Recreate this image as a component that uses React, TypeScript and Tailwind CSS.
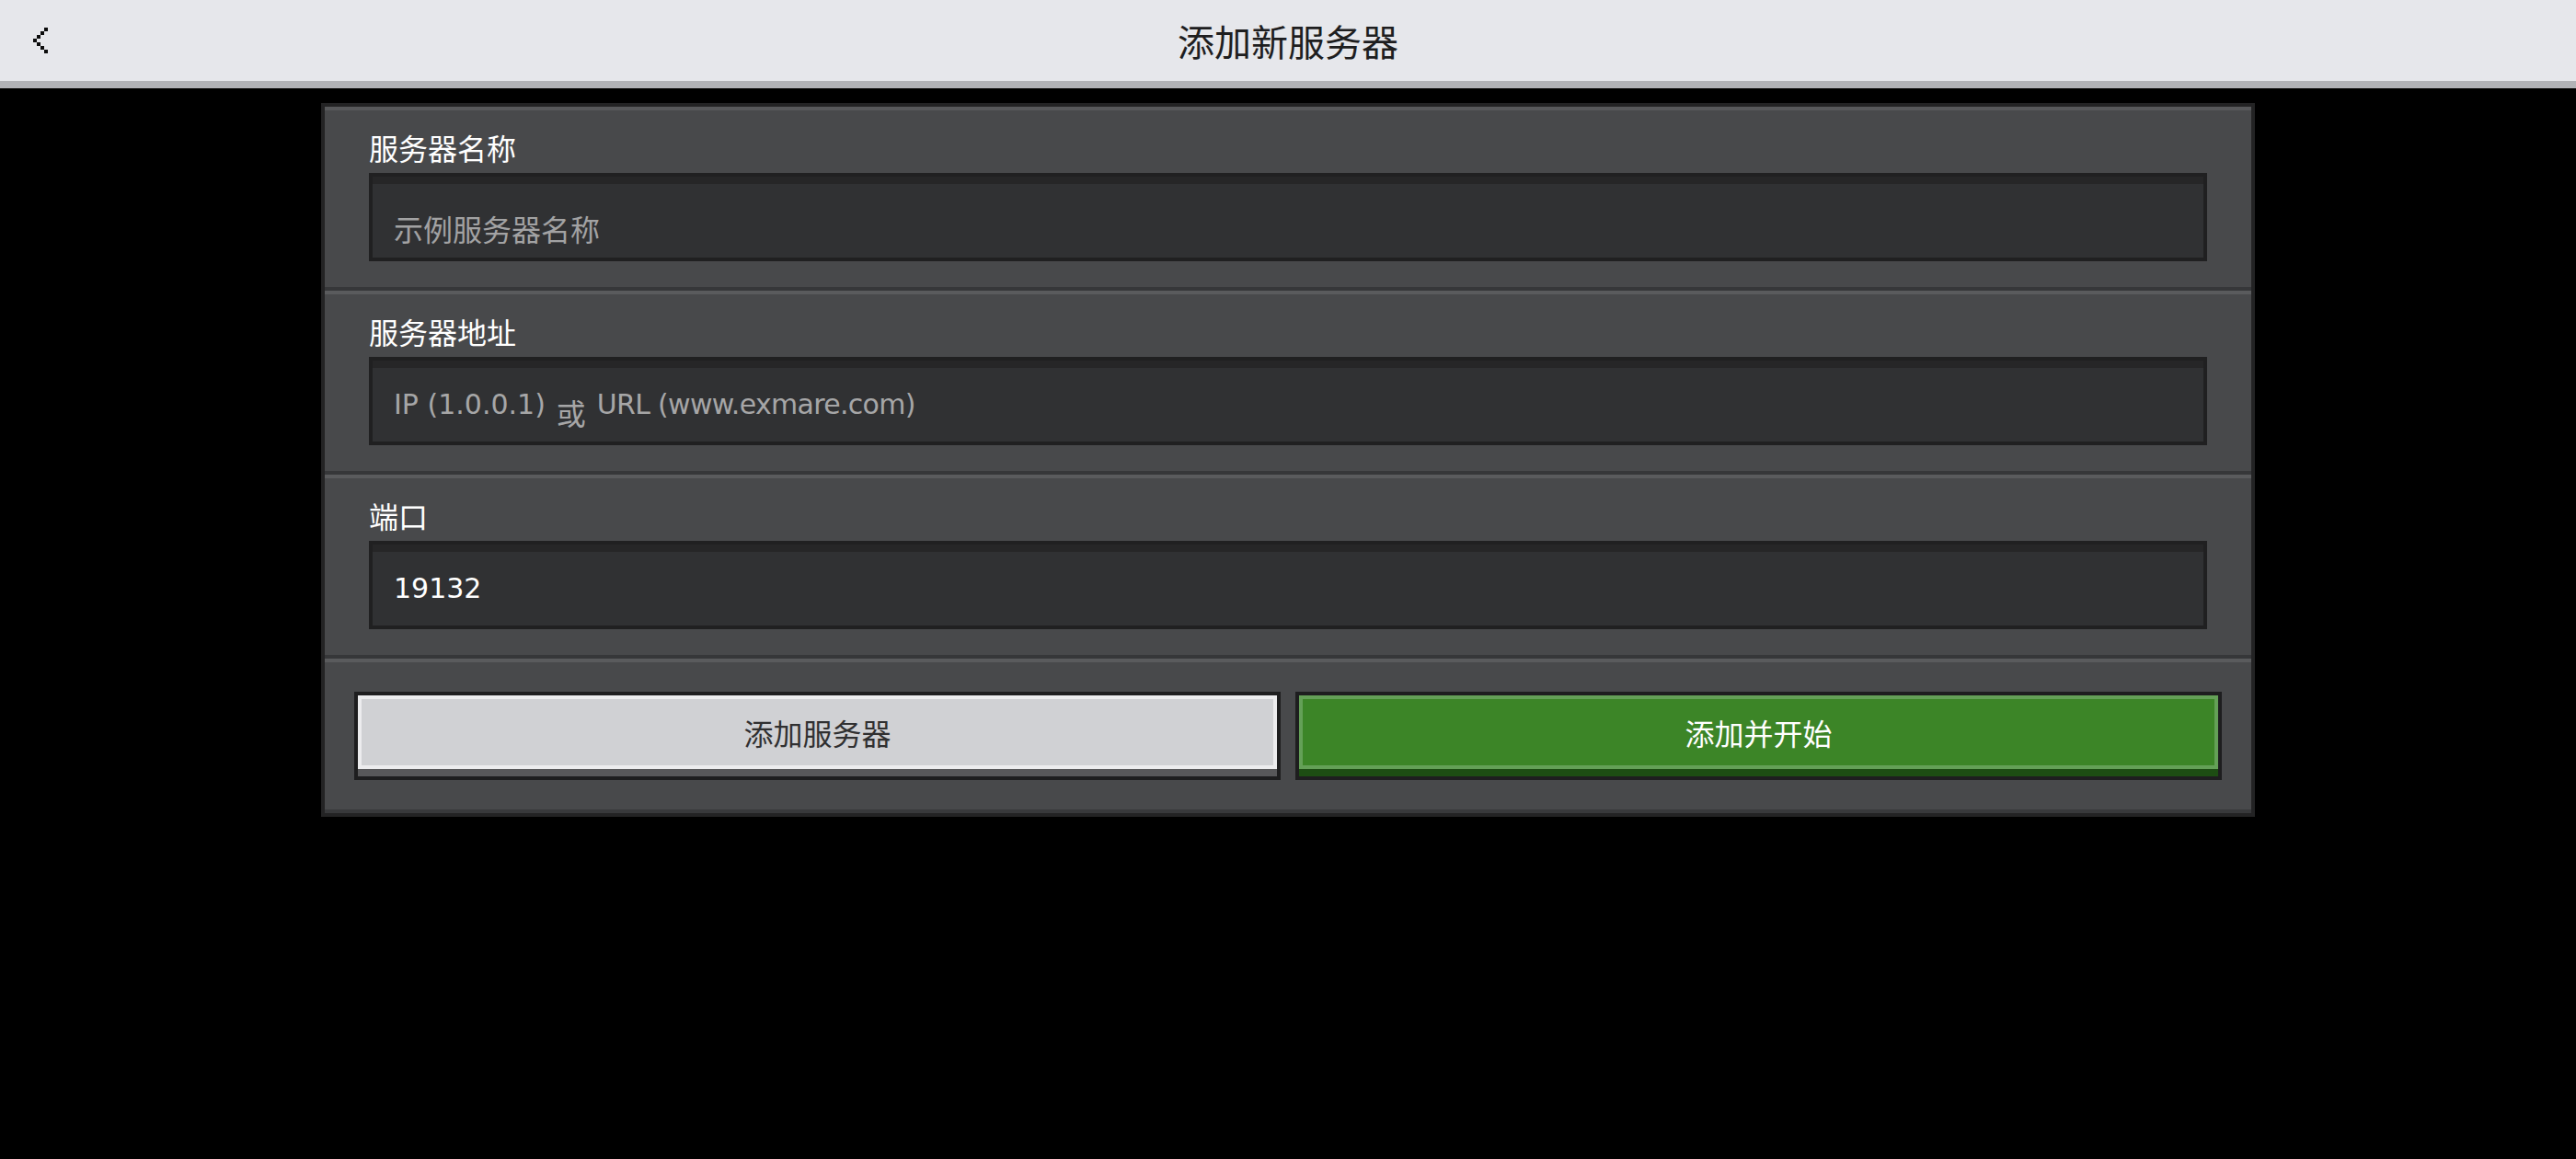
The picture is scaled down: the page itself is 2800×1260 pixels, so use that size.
import React from "react";

const CJK = "font-['Noto_Sans_CJK_SC','Noto_Sans',sans-serif]";
const LAT = "font-['DejaVu_Sans','Noto_Sans_CJK_SC',sans-serif]";

function BackArrow() {
  const blocks = [
    [12, 0],
    [8, 4],
    [4, 8],
    [0, 12],
    [4, 16],
    [8, 20],
    [12, 24],
  ];
  return (
    <svg width="16" height="28" viewBox="0 0 16 28" shapeRendering="crispEdges">
      {blocks.map(([x, y], i) => (
        <rect key={i} x={x} y={y} width="4" height="4" fill="#0c0c0c" />
      ))}
    </svg>
  );
}

function Divider() {
  return (
    <div>
      <div className="h-[4px] bg-[#363739]" />
      <div className="h-[4px] bg-[#5a5b5d]" />
    </div>
  );
}

function Field({ label, children }: { label: string; children: React.ReactNode }) {
  return (
    <div className="px-[48px] pt-[24px] pb-[28px]">
      <div className={`${CJK} h-[32px] text-[32px] leading-[32px] font-normal text-white`}>{label}</div>
      <div className="mt-[12px] h-[96px] border-4 border-[#202021] bg-[#303133]">
        <div className="h-[8px] bg-[#262627]" />
        <div className="flex items-start pl-[23px] whitespace-nowrap">{children}</div>
      </div>
    </div>
  );
}

export default function App() {
  return (
    <div className={`min-h-screen bg-black ${CJK}`}>
      <header className="grid h-[96px] grid-cols-[1fr_auto_1fr] items-center border-b-8 border-[#b1b2b6] bg-[#e6e7eb]">
        <div className="flex items-center pl-[36px]">
          <BackArrow />
        </div>
        <h1 className="text-[40px] font-normal leading-[40px] text-[#1e1e1f]">添加新服务器</h1>
        <div />
      </header>

      <main className="pt-[16px]">
        <div className="mx-auto w-[2102px] border-4 border-[#232324] bg-[#48494b]">
          <div className="h-[4px] bg-[#58595b]" />

          <Field label="服务器名称">
            <span className={`${CJK} mt-[32px] text-[32px] leading-[32px] text-[#a2a2a3]`}>示例服务器名称</span>
          </Field>
          <Divider />

          <Field label="服务器地址">
            <span className={`${LAT} mt-[25px] text-[30px] leading-[30px] text-[#a6a6a7]`}>IP (1.0.0.1)</span>
            <span className={`${CJK} ml-[12px] mt-[32px] text-[32px] leading-[32px] text-[#a6a6a7]`}>或</span>
            <span className={`${LAT} ml-[12px] mt-[25px] text-[30px] leading-[30px] tracking-[-0.7px] text-[#a6a6a7]`}>
              URL (www.exmare.com)
            </span>
          </Field>
          <Divider />

          <Field label="端口">
            <span className={`${LAT} mt-[25px] text-[30px] leading-[30px] text-white`}>19132</span>
          </Field>
          <Divider />

          <div className="flex gap-[16px] p-[32px]">
            <button className="flex h-[96px] flex-1 flex-col border-4 border-[#1e1e1f]">
              <div className="flex w-full flex-1 items-center justify-center border-4 border-[#ececee] bg-[#d0d1d4] text-[32px] leading-[32px] text-[#303031]">
                添加服务器
              </div>
              <div className="h-[8px] w-full bg-[#58585a]" />
            </button>
            <button className="flex h-[96px] flex-1 flex-col border-4 border-[#1e1e1f]">
              <div className="flex w-full flex-1 items-center justify-center border-4 border-[#64a057] bg-[#3c8527] text-[32px] leading-[32px] text-white">
                添加并开始
              </div>
              <div className="h-[8px] w-full bg-[#1d4d13]" />
            </button>
          </div>
          <div className="h-[4px] bg-[#38393b]" />
        </div>
      </main>
    </div>
  );
}
